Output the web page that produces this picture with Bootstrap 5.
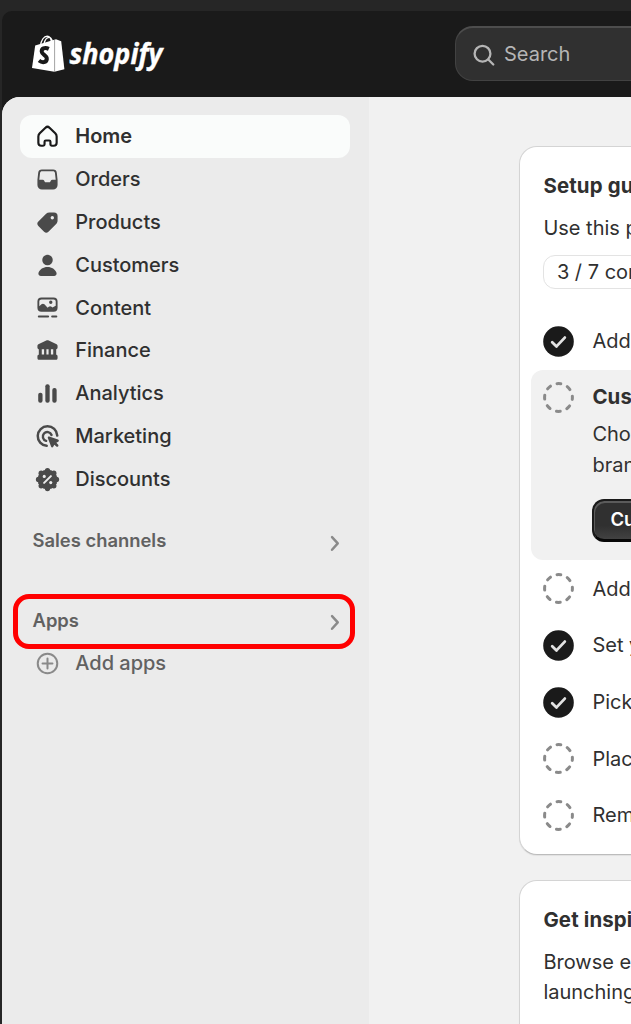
<!DOCTYPE html>
<html lang="en">
<head>
<meta charset="utf-8">
<meta name="viewport" content="width=device-width, initial-scale=1">
<title>Shopify admin</title>
<link href="https://cdn.jsdelivr.net/npm/bootstrap@5.3.0/dist/css/bootstrap.min.css" rel="stylesheet">
<style>
body{font-family:Inter,sans-serif;font-size:20px;line-height:30.6px;color:#303030;background:#262626;height:1024px;overflow:hidden;padding:11px 0 0 2px}
.shell{background:#1a1a1a;height:1013px;border-radius:10px 0 0 0;overflow:hidden}
.topbar{height:85.5px;padding-left:30px}
.brand-logo{width:134px;height:40px;margin-top:2px;overflow:visible}
.searchbox{width:300px;height:55px;margin-left:289px;border:1px solid #424242;border-top:2px solid #4d4d4d;border-radius:18px;background:#303030;color:#b5b5b5;padding-left:12px;gap:5px}
.frame{height:928px;border-radius:18px 0 0 0;background:#f1f1f1}
.side{width:367px;background:#ebebeb;padding:18.4px 18.6px 0 18px}
.side .nav-link{height:42.9px;padding:0 12px;gap:12.3px;color:#303030;font-weight:550;border-radius:12px;letter-spacing:-.02px}
.side .nav-link.active{background:#fafcfb;font-weight:600;letter-spacing:-.02px}
.side svg,.ico{width:31px;height:31px;flex:none;fill:#4a4a4a}
.side .sect{color:#616161;font-size:18.4px;font-weight:600;height:54px;padding:0 0 0 12.5px}
.marked{height:55px;border:5px solid #f00;border-radius:16px;margin:25px -5px 0 -7px}
.marked .sect{padding-left:14.5px;height:45px}
.side .addapps{color:#616161;margin-top:-7.5px}
.canvas-col{padding-left:150.4px;padding-top:49.5px;min-width:0}
.panel{width:620px;border:1px solid #d4d4d4;border-bottom-color:#bcbcbc;border-radius:18px;background:#fff;box-shadow:0 1px 1px #0001}
.panel h2{font-size:20.4px;font-weight:700;line-height:30px;margin:0;letter-spacing:.15px}
.setup{height:709px;padding:23.8px 11px 0}
.progress-pill{display:inline-flex;align-items:center;height:34px;border:1.5px solid #e3e3e3;border-radius:12px;padding:0 12.5px;margin-top:12px}
.task{height:56.7px;padding-left:12px;gap:18px}
.task.open{height:190px;background:#f1f1f1;border-radius:12px;padding-top:12px;margin-bottom:.5px}
.open .copy{margin-top:7px}
.btn-ink{display:block;height:43px;width:170px;margin-top:19px;background:linear-gradient(#303030 65%,#424242);border:2px solid #1a1a1a;border-bottom:3px solid #080808;border-radius:12px;color:#fff;font-size:18.5px;font-weight:600;box-shadow:inset 1px 2px 0 #5b5b5b;padding:0 16px;text-align:left}
.inspire{margin-top:25px;height:250px;padding:23.5px 23px}
</style>
</head>
<body>
<svg class="d-none" xmlns="http://www.w3.org/2000/svg">
<symbol id="done" viewBox="0 0 31 31"><circle cx="15.5" cy="15.5" r="15.3" fill="#1a1a1a"/><path d="M9.2 16.2l4.3 4.2 8.3-8.8" fill="none" stroke="#e3e3e3" stroke-width="2.8" stroke-linecap="round" stroke-linejoin="round"/></symbol>
<symbol id="todo" viewBox="0 0 31 31"><circle cx="15.5" cy="15.5" r="13.9" fill="none" stroke="#8a8a8a" stroke-width="3" stroke-linecap="round" stroke-dasharray="3.9 7.017" stroke-dashoffset="1.95"/></symbol>
<symbol id="chev" viewBox="0 0 20 20"><path d="M8.4 6.5l3.7 4.1-3.7 4.1" fill="none" stroke="#8a8a8a" stroke-width="1.6" stroke-linecap="round" stroke-linejoin="round"/></symbol>
</svg>
<div class="shell">
<header class="topbar d-flex align-items-center">
<svg class="brand-logo flex-shrink-0" viewBox="0 0 134 40">
<path d="M3.2 10.5L24 4.2l5.2 2 3.2 28-10 2.5L0 33z" fill="#fff"/>
<path d="M8.5 10.5C9.3 5 12 1.2 15.2 1.2c2.5 0 4 2.8 4.3 6M12 9c.7-3.8 3-6.6 5.1-6.6 1.5 0 2.7 1.7 3.3 4.2" fill="none" stroke="#fff" stroke-width="1.4"/>
<path d="M22.6 5v32" stroke="#8b8b8b" stroke-width=".8"/>
<path d="M16.8 13.9c-4.3-2-7.3-.2-7.1 2.7.2 3.2 5.4 3.6 5.1 7.4-.2 3.4-4.4 4.2-7.8 1.5" fill="none" stroke="#1a1a1a" stroke-width="4"/>
<text x="37.5" y="29" textLength="93" lengthAdjust="spacingAndGlyphs" font-family="Open Sans, sans-serif" font-size="29" font-weight="700" font-style="italic" fill="#fff" stroke="#fff" stroke-width=".4">shopify</text>
</svg>
<div class="searchbox d-flex align-items-center flex-shrink-0">
<svg class="ico" viewBox="0 0 31 31"><g fill="none" stroke="#b5b5b5" stroke-width="2.3" stroke-linecap="round"><circle cx="14.5" cy="14.7" r="7.9"/><path d="M20.3 20.5l5 5"/></g></svg>
<span>Search</span></div>
</header>
<div class="frame d-flex overflow-hidden">
<aside class="side flex-shrink-0">
<nav class="nav flex-column">
<a class="nav-link active d-flex align-items-center" href="#"><svg viewBox="0 0 20 20"><path d="M8.7 4.35a1.85 1.85 0 0 1 2.6 0l3.7 3.6c.6.6.9 1.3.9 2.1v4a1.9 1.9 0 0 1-1.9 1.9h-1.2a.9.9 0 0 1-.9-.9V13.4a.8.8 0 0 0-.8-.8H8.9a.8.8 0 0 0-.8.8v1.65a.9.9 0 0 1-.9.9H6a1.9 1.9 0 0 1-1.9-1.9v-4c0-.8.3-1.5.9-2.1z" fill="none" stroke="#1a1a1a" stroke-width="1.4"/></svg>Home</a>
<a class="nav-link d-flex align-items-center" href="#"><svg viewBox="0 0 20 20"><path fill-rule="evenodd" d="M6.4 3.5h7.2a2.4 2.4 0 0 1 2.4 2.1l.5 4.6v3.4a2.9 2.9 0 0 1-2.9 2.9H6.4a2.9 2.9 0 0 1-2.9-2.9v-3.4L4 5.6a2.4 2.4 0 0 1 2.4-2.1zM6.5 4.7c-.7 0-1.2.4-1.3 1.1l-.5 4.4h2.2c.5 0 .8.2 1 .6l.3.6c.2.3.4.4.7.4h2.2c.3 0 .5-.1.7-.4l.3-.6c.2-.4.6-.6 1-.6h2.2l-.5-4.4c-.1-.7-.6-1.1-1.3-1.1z"/></svg>Orders</a>
<a class="nav-link d-flex align-items-center" href="#"><svg viewBox="0 0 20 20"><path fill-rule="evenodd" d="M11.3 3.5h2.9a2.3 2.3 0 0 1 2.3 2.3v2.9c0 .8-.3 1.6-.9 2.2l-5 5a2 2 0 0 1-2.8 0l-3.7-3.7a2 2 0 0 1 0-2.8l5-5a3 3 0 0 1 2.2-.9zM13.1 8a1.1 1.1 0 1 0 0-2.2 1.1 1.1 0 0 0 0 2.2z"/></svg>Products</a>
<a class="nav-link d-flex align-items-center" href="#"><svg viewBox="0 0 20 20"><circle cx="10" cy="6.4" r="3.4"/><path d="M4.2 14.6c.8-2.2 3-3.7 5.8-3.7s5 1.5 5.8 3.7c.4 1.1-.5 2.1-1.6 2.1H5.8c-1.1 0-2-1-1.6-2.1z"/></svg>Customers</a>
<a class="nav-link d-flex align-items-center" href="#"><svg viewBox="0 0 20 20"><path fill-rule="evenodd" d="M6.1 3.5h7.8a2.6 2.6 0 0 1 2.6 2.6v4.1a2.6 2.6 0 0 1-2.6 2.6H6.1a2.6 2.6 0 0 1-2.6-2.6V6.1a2.6 2.6 0 0 1 2.6-2.6zM6.2 4.8c-.9 0-1.5.6-1.5 1.4v3l1.4-1.3c.6-.5 1.3-.5 1.9 0l2.1 2.2.7-.6c.6-.5 1.2-.5 1.8 0l.6.5 2.1-1.1V6.2c0-.8-.6-1.4-1.4-1.4zm5.9 2.9a1.1 1.1 0 1 0 0-2.2 1.1 1.1 0 0 0 0 2.2z"/><path d="M4.4 15.8h6M13 15.8h2.7" stroke="#4a4a4a" stroke-width="1.3" stroke-linecap="round"/></svg>Content</a>
<a class="nav-link d-flex align-items-center" href="#"><svg viewBox="0 0 20 20"><path d="M9.2 3.6c.5-.3 1.1-.3 1.6 0l5.1 2.4c.4.2.6.6.6 1v1c0 .7-.5 1.2-1.2 1.2H4.7c-.7 0-1.2-.5-1.2-1.2V7c0-.4.2-.8.6-1zM4.4 9h1.9v3.8H4.4zm3.4 0h1.5v3.8H7.8zm2.9 0h1.5v3.8h-1.5zm3 0h1.9v3.8h-1.9zM4.7 12.5h10.6c.8 0 1.2.5 1.2 1.3v1c0 .8-.4 1.2-1.2 1.2H4.7c-.8 0-1.2-.4-1.2-1.2v-1c0-.8.4-1.3 1.2-1.3z"/></svg>Finance</a>
<a class="nav-link d-flex align-items-center" href="#"><svg viewBox="0 0 20 20"><rect x="4" y="9.5" width="2.8" height="6.5" rx="1.3"/><rect x="8.6" y="4" width="2.8" height="12" rx="1.3"/><rect x="13.1" y="6.4" width="2.8" height="9.6" rx="1.3"/></svg>Analytics</a>
<a class="nav-link d-flex align-items-center" href="#"><svg viewBox="0 0 20 20"><g fill="none" stroke="#4a4a4a" stroke-width="1.6" stroke-linecap="round"><path d="M16.3 9.4A6.3 6.3 0 1 0 9.5 16"/><path d="M12.6 9a2.9 2.9 0 1 0-3.5 3.8"/></g><path d="M10.2 10.9c-.2-.6.3-1.1.9-.9l5.7 2c.7.3.7 1.1.1 1.4l-1.2.6 1.2 1.3c.6.7-.5 1.8-1.2 1.2l-1.3-1.2-.7 1.3c-.3.6-1.2.6-1.4-.1z"/></svg>Marketing</a>
<a class="nav-link d-flex align-items-center" href="#"><svg viewBox="0 0 20 20"><path d="M10 3.9l2.5.1 1.8 1.7 1.7 1.8.1 2.5-.1 2.5-1.7 1.8-1.8 1.7-2.5.1-2.5-.1-1.8-1.7L4 12.5 3.9 10 4 7.5l1.7-1.8L7.5 4z"/><g><circle cx="10" cy="4.2" r="1.7"/><circle cx="14.1" cy="5.9" r="1.7"/><circle cx="15.8" cy="10" r="1.7"/><circle cx="14.1" cy="14.1" r="1.7"/><circle cx="10" cy="15.8" r="1.7"/><circle cx="5.9" cy="14.1" r="1.7"/><circle cx="4.2" cy="10" r="1.7"/><circle cx="5.9" cy="5.9" r="1.7"/></g><path d="M7.8 12.2l4.4-4.4" stroke="#ebebeb" stroke-width="1.3" stroke-linecap="round"/><circle cx="7.9" cy="8" r="1" fill="#ebebeb"/><circle cx="12.1" cy="12" r="1" fill="#ebebeb"/></svg>Discounts</a>
</nav>
<div class="sect d-flex align-items-center justify-content-between" style="margin-top:14.5px">
<span class="pb-1">Sales channels</span><svg><use href="#chev"/></svg></div>
<div class="marked"><div class="sect d-flex align-items-center justify-content-between"><span class="pb-1">Apps</span><svg><use href="#chev"/></svg></div></div>
<a class="nav-link d-flex align-items-center addapps" href="#"><svg viewBox="0 0 20 20"><g fill="none" stroke="#8a8a8a" stroke-width="1.3" stroke-linecap="round"><circle cx="10" cy="10" r="6.3"/><path d="M10 6.8v6.4M6.8 10h6.4"/></g></svg>Add apps</a>
</aside>
<main class="canvas-col text-nowrap">
<section class="panel setup">
<div class="ps-2 ms-1"><h2>Setup guide</h2>
<div class="mt-2 pt-1">Use this personalized guide to get your store up and running.</div>
<div class="progress-pill">3 / 7 completed</div></div>
<div class="task d-flex align-items-center mt-4"><svg class="ico"><use href="#done"/></svg>Add your first product</div>
<div class="task open d-flex"><svg class="ico"><use href="#todo"/></svg>
<div><h2>Customize your online store</h2><div class="copy">Choose a theme and add your logo to reflect your<br>brand.</div><button class="btn btn-ink">Customize theme</button></div></div>
<div class="task d-flex align-items-center"><svg class="ico"><use href="#todo"/></svg>Add a custom domain</div>
<div class="task d-flex align-items-center"><svg class="ico"><use href="#done"/></svg>Set your shipping rates</div>
<div class="task d-flex align-items-center"><svg class="ico"><use href="#done"/></svg>Pick a plan</div>
<div class="task d-flex align-items-center"><svg class="ico"><use href="#todo"/></svg>Place a test order</div>
<div class="task d-flex align-items-center"><svg class="ico"><use href="#todo"/></svg>Remove store password</div>
</section>
<section class="panel inspire"><h2>Get inspired</h2><div class="mt-2 pt-1">Browse examples of stores before<br>launching your own.</div></section>
</main>
</div>
</div>
<script src="https://cdn.jsdelivr.net/npm/bootstrap@5.3.0/dist/js/bootstrap.bundle.min.js"></script>
</body>
</html>
